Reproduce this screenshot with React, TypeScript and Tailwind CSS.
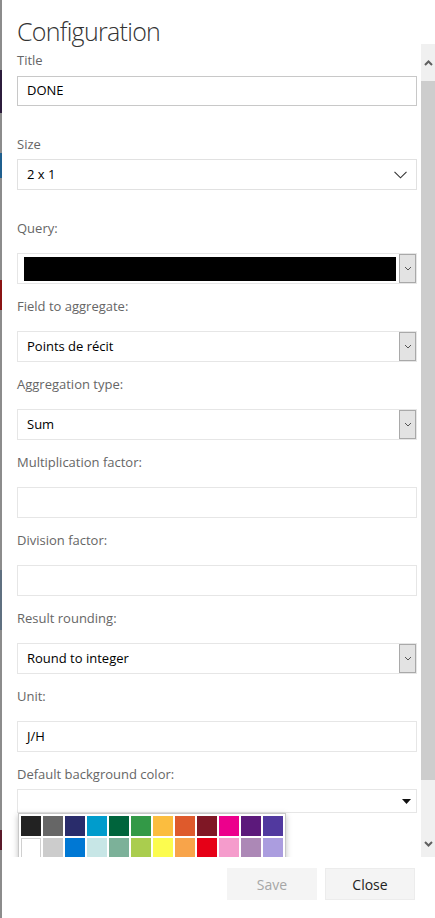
import React from 'react';

const font = { fontFamily: '"Open Sans", "Noto Sans", Arial, sans-serif' };

const row1 = ['#222222', '#666666', '#292c6b', '#009ccc', '#00643c', '#339947', '#fbbd3f', '#de5a2c', '#7f1725', '#ec008c', '#5c197b', '#51399f'];
const row2 = ['#ffffff', '#cccccc', '#0078d4', '#c7e6e6', '#7cb199', '#aacd4e', '#fcfc4f', '#f8a44a', '#e60017', '#f59ccc', '#ac88b6', '#ab9ddf'];

const Label: React.FC<{ text: string; className?: string }> = ({ text, className }) => (
  <div className={`h-5 text-[13px] leading-5 text-[#666666] ${className ?? ''}`}>{text}</div>
);

const SmallChevron = () => (
  <svg width="8" height="5" viewBox="0 0 8 5" fill="none">
    <path d="M1 1l3 3 3-3" stroke="#555" strokeWidth="1" />
  </svg>
);

const OldSelect: React.FC<{ value?: string; black?: boolean; className?: string }> = ({ value, black, className }) => (
  <div className={`flex h-[31px] items-stretch border border-[#e6e6e6] bg-white ${className ?? ''}`}>
    <div className="flex flex-1 items-center pl-[9px] text-[13px] text-black">
      {black ? <div className="ml-[-3px] mr-[3px] h-[24px] w-full bg-black" /> : value}
    </div>
    <div className="flex w-[17px] items-center justify-center border border-[#a9a9a9] bg-[#e3e3e3]">
      <SmallChevron />
    </div>
  </div>
);

const TextBox: React.FC<{ value?: string; className?: string }> = ({ value, className }) => (
  <div className={`flex h-[31px] items-center border border-[#e6e6e6] bg-white pl-[9px] text-[13px] text-black ${className ?? ''}`}>
    {value}
  </div>
);

const App: React.FC = () => {
  return (
    <div className="flex h-[918px] w-[435px] overflow-hidden bg-white" style={font}>
      {/* page behind the panel */}
      <div className="flex w-[2px] flex-col bg-[#8c8c8c]">
        <div className="h-[70px]" />
        <div className="h-[43px] bg-[#2c1c3c]" />
        <div className="h-[40px]" />
        <div className="h-[25px] bg-[#1f5f8e]" />
        <div className="h-[102px]" />
        <div className="h-[30px] bg-[#8a1414]" />
        <div className="h-[260px]" />
        <div className="h-[60px] bg-[#5f7080]" />
        <div className="h-[200px]" />
        <div className="h-[20px] bg-[#5a1a2a]" />
      </div>

      <div className="flex flex-1 flex-col">
        <div className="h-[44px] pl-[15px] pt-[15px] text-[25px] font-light leading-[32px] tracking-[-0.7px] text-[#333333]">Configuration</div>

        <div className="flex h-[813px]">
          <div className="flex-1 overflow-hidden pl-[15px] pr-[4px]">
            <Label text="Title" className="mt-[6px]" />
            <div className="mt-[6px] flex h-[30px] items-center border border-[#c8c8c8] pl-[9px] text-[13px] text-black">DONE</div>

            <Label text="Size" className="mt-[28px]" />
            <div className="mt-[5px] flex h-[31px] items-center justify-between border border-[#e1e1e1] pl-[9px] pr-[9px] text-[13px] text-black">
              <span>2 x 1</span>
              <svg width="13" height="8" viewBox="0 0 13 8" fill="none">
                <path d="M0.5 0.8l6 6 6-6" stroke="#333" strokeWidth="1.1" />
              </svg>
            </div>

            <Label text="Query:" className="mt-[28px]" />
            <OldSelect black className="mt-[15px]" />

            <Label text="Field to aggregate:" className="mt-[12px]" />
            <OldSelect value="Points de récit" className="mt-[15px]" />

            <Label text="Aggregation type:" className="mt-[12px]" />
            <OldSelect value="Sum" className="mt-[15px]" />

            <Label text="Multiplication factor:" className="mt-[12px]" />
            <TextBox className="mt-[15px]" />

            <Label text="Division factor:" className="mt-[12px]" />
            <TextBox className="mt-[15px]" />

            <Label text="Result rounding:" className="mt-[12px]" />
            <OldSelect value="Round to integer" className="mt-[15px]" />

            <Label text="Unit:" className="mt-[12px]" />
            <TextBox value="J/H" className="mt-[15px]" />

            <Label text="Default background color:" className="mt-[12px]" />
            <div className="mt-[5px] flex h-[24px] items-center justify-end border border-[#e6e6e6] pr-[5px]">
              <svg width="9" height="5" viewBox="0 0 9 5">
                <path d="M0 0h9L4.5 5z" fill="#111" />
              </svg>
            </div>
            <div className="ml-[1px] w-[268px] border border-[#c8c8c8] bg-white p-[2px] shadow-[0_2px_6px_rgba(0,0,0,0.25)]">
              <div className="grid grid-cols-12 gap-[2px]">
                {row1.map((c) => (
                  <div key={c} className="h-[20px] w-[20px]" style={{ backgroundColor: c }} />
                ))}
                {row2.map((c) => (
                  <div
                    key={c}
                    className={`h-[20px] w-[20px] ${c === '#ffffff' ? 'border border-[#d0d0d0]' : ''}`}
                    style={{ backgroundColor: c }}
                  />
                ))}
              </div>
            </div>
          </div>

          {/* scrollbar */}
          <div className="flex w-[14px] flex-col bg-[#f0f0f0]">
            <div className="flex h-[37px] items-center justify-center">
              <svg width="9" height="6" viewBox="0 0 9 6" fill="none">
                <path d="M1 5l3.5-3.5L8 5" stroke="#606060" strokeWidth="2" />
              </svg>
            </div>
            <div className="h-[699px] bg-[#cdcdcd]" />
            <div className="flex-1" />
            <div className="flex h-[26px] items-center justify-center">
              <svg width="9" height="6" viewBox="0 0 9 6" fill="none">
                <path d="M1 1l3.5 3.5L8 1" stroke="#606060" strokeWidth="2" />
              </svg>
            </div>
          </div>
        </div>

        <div className="flex justify-end gap-[8px] pr-[20px] pt-[11px]">
          <button className="h-[32px] w-[90px] bg-[#f4f4f4] text-[14px] text-[#a6a6a6]">Save</button>
          <button className="h-[32px] w-[90px] border border-[#ececec] bg-[#f4f4f4] text-[14px] text-[#222]">Close</button>
        </div>
      </div>
    </div>
  );
};

export default App;
